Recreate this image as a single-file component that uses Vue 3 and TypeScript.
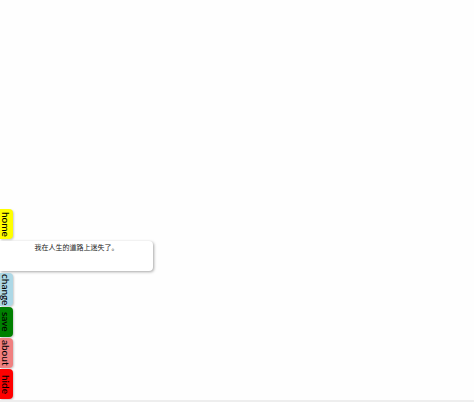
<script setup lang="ts">
interface Tab {
  label: string
  tone: string
}

const firstTab: Tab = { label: 'home', tone: 'yellow' }
const tabs: Tab[] = [
  { label: 'change', tone: 'blue' },
  { label: 'save', tone: 'green' },
  { label: 'about', tone: 'coral' },
  { label: 'hide', tone: 'red' },
]
const quote = '我在人生的道路上迷失了。'
</script>

<template>
  <main class="page">
    <nav class="dock">
      <button type="button" class="tab" :class="firstTab.tone">{{ firstTab.label }}</button>
      <p class="quote">{{ quote }}</p>
      <button v-for="tab in tabs" :key="tab.label" type="button" class="tab" :class="tab.tone">
        {{ tab.label }}
      </button>
    </nav>
    <footer class="track"></footer>
  </main>
</template>

<style>
body {
  margin: 0;
  background: #fefefe;
}
</style>

<style scoped>
.page {
  display: flex;
  flex-direction: column;
  justify-content: flex-end;
  min-height: 100vh;
}

.dock {
  display: flex;
  flex-direction: column;
  align-items: flex-start;
  gap: 1px;
  padding-bottom: 1px;
}

.tab {
  box-sizing: border-box;
  display: flex;
  align-items: center;
  justify-content: center;
  width: 13px;
  min-height: 30px;
  margin: 0;
  padding: 0 2px 0 0;
  border: 0;
  border-radius: 0 4px 4px 0;
  box-shadow: 1px 1px 2px rgba(0, 0, 0, 0.2);
  color: #000;
  font: 500 10px/11px Lato, "Noto Sans", sans-serif;
  writing-mode: vertical-rl;
  cursor: pointer;
}

.yellow {
  background: yellow;
}

.blue {
  min-height: 33px;
  background: lightblue;
}

.green {
  background: green;
}

.coral {
  background: lightcoral;
}

.red {
  background: red;
}

.quote {
  box-sizing: border-box;
  width: 153px;
  min-height: 30px;
  margin: 1px 0;
  border-radius: 0 4px 4px 0;
  background: #fff;
  box-shadow: 1px 1px 3px rgba(0, 0, 0, 0.35);
  color: #222;
  font: 7px/12px "Noto Sans CJK SC", sans-serif;
  text-align: center;
}

.track {
  height: 2px;
  background: #eee;
}
</style>
